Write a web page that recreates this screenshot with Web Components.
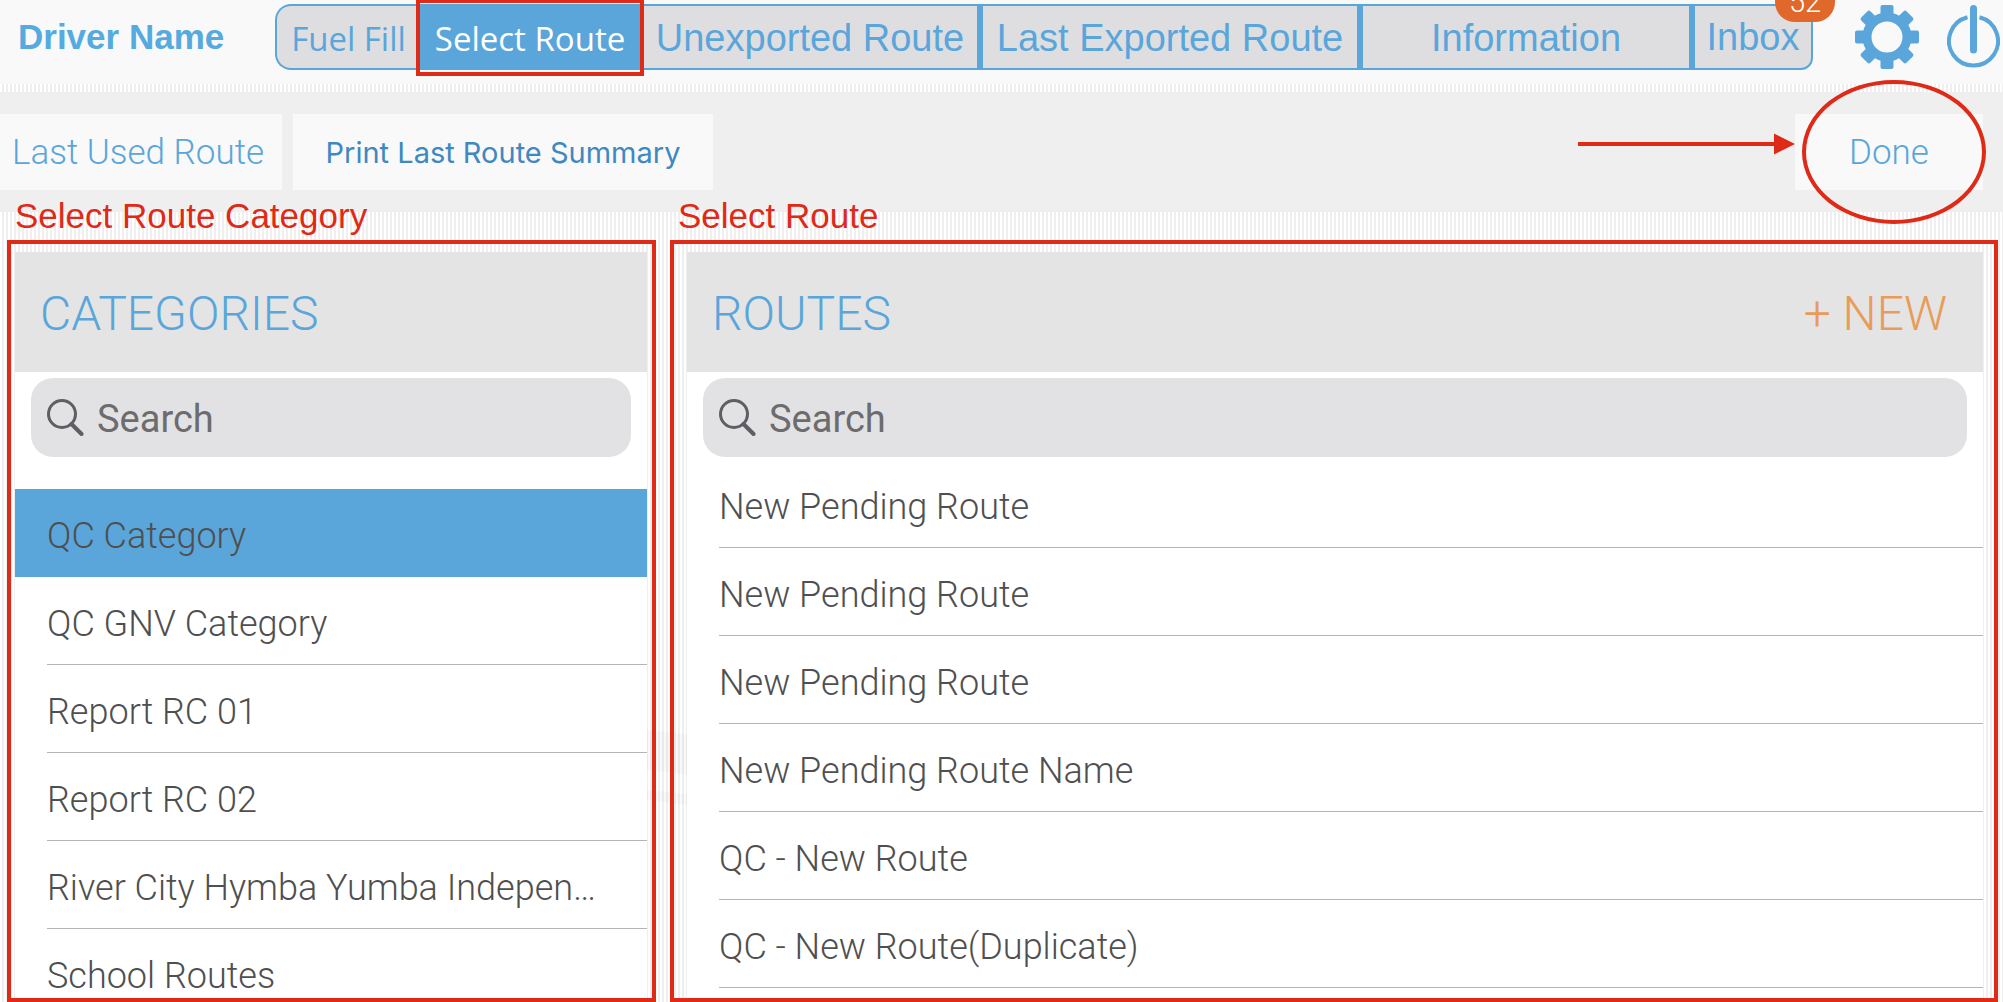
<!DOCTYPE html>
<html lang="en">
<head>
<meta charset="utf-8">
<title>Select Route</title>
<style>
  html, body { height: 100%; }
  body {
    margin: 0;
    overflow: hidden;
    font-family: "Liberation Sans", Arial, sans-serif;
    --blue: #5aa6db;
    --red: #df2a17;
    --light: Roboto, "Liberation Sans", sans-serif;
  }
</style>
</head>
<body>
<route-app></route-app>

<script>
class BaseElement extends HTMLElement {
  constructor() {
    super();
    const template = document.createElement("template");
    template.innerHTML = `
      <style>
        :host { box-sizing: border-box; }
        *, *::before, *::after { box-sizing: border-box; }
        button { font: inherit; color: inherit; border: 0; margin: 0; padding: 0; background: none; cursor: pointer; }
      </style>
      ${this.render()}
    `;
    this.attachShadow({ mode: "open" }).appendChild(template.content.cloneNode(true));
  }
}

class NavTab extends BaseElement {
  render() {
    return `
      <style>
        :host { display: block; position: relative; min-width: 0; font-size: 38px; color: var(--blue); }
        button {
          width: 100%;
          height: 100%;
          padding-top: 2px;
          background: #dedee0;
          border: 2px solid var(--blue);
          border-width: 2px 3px;
          white-space: nowrap;
        }
        :host(:first-child) button { border-radius: 16px 0 0 16px; border-left-width: 2px; border-right: 0; }
        :host(:last-child) button { border-radius: 0 0 12px 0; border-right-width: 2px; padding-top: 0; }
        :host([humanist]) { font-family: "Open Sans", "Noto Sans", sans-serif; font-size: 33px; }
        :host([active]) { color: #fff; z-index: 1; }
        :host([active]) button { background: var(--blue); }
        :host([active])::after {
          content: "";
          position: absolute;
          inset: -5px -4px -6px;
          border: 4px solid var(--red);
          pointer-events: none;
        }
        ::slotted(.badge) {
          position: absolute;
          top: -26px;
          right: -22px;
          width: 60px;
          height: 44px;
          line-height: 48px;
          border-radius: 20px;
          background: #e0682b;
          color: #fff;
          font-family: var(--light);
          font-weight: 300;
          font-size: 29px;
          text-align: center;
        }
      </style>
      <button type="button"><slot></slot></button>
      <slot name="badge"></slot>
    `;
  }
}

class AppHeader extends BaseElement {
  render() {
    return `
      <style>
        :host {
          display: flex;
          flex: none;
          height: 84px;
          padding: 4px 3px 14px 18px;
          background: #f9f9f9;
        }
        .name { flex: none; width: 257px; line-height: 66px; font-size: 35px; font-weight: bold; color: #55aadf; }
        nav { flex: 1; display: grid; grid-template-columns: 145fr 220fr 340fr 380fr 332fr 121fr; }
        .icons { display: flex; gap: 28px; padding-left: 42px; color: var(--blue); }
        svg { display: block; height: 64px; }
      </style>
      <div class="name">Driver Name</div>
      <nav>
        <nav-tab humanist>Fuel Fill</nav-tab>
        <nav-tab humanist active>Select Route</nav-tab>
        <nav-tab>Unexported Route</nav-tab>
        <nav-tab>Last Exported Route</nav-tab>
        <nav-tab>Information</nav-tab>
        <nav-tab>Inbox<span class="badge" slot="badge">52</span></nav-tab>
      </nav>
      <div class="icons">
        <button type="button" aria-label="Settings">
          <svg width="64" viewBox="0 0 64 64" fill="currentColor">
            <circle cx="32" cy="32" r="20" fill="none" stroke="currentColor" stroke-width="9"/>
            <g id="teeth">
              <rect x="25.5" y="0" width="13" height="13" rx="2"/>
              <rect x="25.5" y="51" width="13" height="13" rx="2"/>
              <rect x="0" y="25.5" width="13" height="13" rx="2"/>
              <rect x="51" y="25.5" width="13" height="13" rx="2"/>
            </g>
            <use href="#teeth" transform="rotate(45 32 32)"/>
          </svg>
        </button>
        <button type="button" aria-label="Log out">
          <svg width="53" viewBox="0 0 53 64" fill="none" stroke="currentColor">
            <path d="M32.5 12.3A24.5 24.5 0 1 1 20.5 12.3" stroke-width="4"/>
            <path d="M26.5 3.5V45" stroke-width="7" stroke-linecap="round"/>
          </svg>
        </button>
      </div>
    `;
  }
}

class ToolButton extends BaseElement {
  render() {
    return `
      <style>
        :host {
          display: block;
          position: relative;
          font-family: var(--light);
          font-weight: 300;
          font-size: 35px;
          color: var(--blue);
        }
        button { height: 76px; width: 100%; background: #f9f9f9; white-space: nowrap; }
        :host([start]) button { padding-left: 12px; text-align: left; }
        :host([plain]) { font-family: Inter, sans-serif; font-weight: 400; font-size: 29px; color: #3f88c0; }
        .ring, .arrow { display: none; }
        :host([circled]) .ring {
          display: block;
          position: absolute;
          inset: -34px -3px -34px 7px;
          border: 4px solid var(--red);
          border-radius: 50%;
          pointer-events: none;
        }
        :host([circled]) .arrow { display: block; position: absolute; right: 100%; top: 18px; }
      </style>
      <button type="button"><slot></slot></button>
      <span class="ring"></span>
      <svg class="arrow" width="217" height="24" viewBox="0 0 217 24" fill="#df2a17">
        <path d="M0 10H196V1.500L217 12L196 22.500V14H0Z"/>
      </svg>
    `;
  }
}

class RouteToolbar extends BaseElement {
  render() {
    return `
      <style>
        :host {
          display: flex;
          flex: none;
          gap: 11px;
          height: 120px;
          margin-top: 8px;
          padding: 22px 20px 22px 0;
          background: #efefef;
        }
        .last { width: 282px; }
        .print { width: 420px; }
        .done { width: 188px; margin-left: auto; z-index: 2; }
      </style>
      <tool-button class="last" start>Last Used Route</tool-button>
      <tool-button class="print" plain>Print Last Route Summary</tool-button>
      <tool-button class="done" circled>Done</tool-button>
    `;
  }
}

class CalloutFrame extends BaseElement {
  render() {
    return `
      <style>
        :host {
          display: flex;
          position: relative;
          min-width: 0;
          min-height: 0;
          border: 4px solid var(--red);
        }
        ::slotted([slot="label"]) {
          position: absolute;
          left: 4px;
          bottom: calc(100% + 4px);
          line-height: 48px;
          font-size: 35px;
          color: var(--red);
          white-space: nowrap;
        }
      </style>
      <slot name="label"></slot>
      <slot></slot>
    `;
  }
}

class SearchField extends BaseElement {
  render() {
    return `
      <style>
        :host { display: block; padding: 6px 16px 0; }
        label {
          display: flex;
          align-items: center;
          gap: 13px;
          height: 79px;
          padding: 0 16px;
          border-radius: 22px;
          background: #e2e2e4;
        }
        svg { flex: none; }
        input {
          flex: 1;
          min-width: 0;
          padding: 3px 0 0;
          border: 0;
          outline: 0;
          background: none;
          font-family: Roboto, sans-serif;
          font-size: 38px;
          color: #444;
        }
        input::placeholder { color: #6c6c6e; opacity: 1; }
      </style>
      <label>
        <svg width="37" height="38" viewBox="0 0 37 38" fill="none" stroke="#5e5e63">
          <circle cx="15" cy="15" r="13.500" stroke-width="3"/>
          <path d="M24.500 25L34.500 35" stroke-width="4" stroke-linecap="round"/>
        </svg>
        <input type="search" placeholder="Search" aria-label="Search">
      </label>
    `;
  }
}

class ListRow extends BaseElement {
  render() {
    return `
      <style>
        :host {
          display: block;
          height: 88px;
          padding-left: 32px;
          font-family: var(--light);
          font-weight: 300;
          font-size: 36px;
          color: #4f4f4f;
        }
        button {
          width: 100%;
          height: 100%;
          padding-top: 6px;
          border-bottom: 1px solid #b4b4b4;
          text-align: left;
          white-space: nowrap;
          overflow: hidden;
          text-overflow: ellipsis;
        }
        :host([selected]) { background: var(--blue); }
        :host([selected]) button { border-color: transparent; }
      </style>
      <button type="button"><slot></slot></button>
    `;
  }
}

class ListPanel extends BaseElement {
  render() {
    return `
      <style>
        :host { display: flex; flex-direction: column; flex: 1; min-width: 0; background: #fff; }
        header {
          display: flex;
          flex: none;
          align-items: center;
          justify-content: space-between;
          height: 120px;
          padding: 2px 36px 0 25px;
          background: #e4e4e4;
          font-family: var(--light);
          font-weight: 300;
          font-size: 48px;
          color: var(--blue);
        }
        .list { flex: 1; min-height: 0; overflow: hidden; padding-top: var(--list-top, 3px); }
        h2 { margin: 0; font: inherit; }
      </style>
      <header><h2><slot name="title"></slot></h2><slot name="action"></slot></header>
      <search-field></search-field>
      <div class="list"><slot></slot></div>
    `;
  }
}

class RouteApp extends BaseElement {
  render() {
    return `
      <style>
        :host {
          display: flex;
          flex-direction: column;
          height: 100vh;
          background: repeating-linear-gradient(90deg, #fff 0 2px, #efefef 2px 4px);
        }
        main {
          flex: 1;
          display: grid;
          grid-template-columns: 649fr 1328fr;
          grid-template-rows: minmax(0, 1fr);
          gap: 14px;
          min-height: 0;
          padding: 28px 5px 0 7px;
          position: relative;
        }
        .categories { padding: 8px 5px 0 4px; }
        .routes { padding: 8px 11px 0 13px; }
        .categories list-panel { --list-top: 32px; }
        .new { color: #e89c58; }
        .watermark { position: absolute; left: 647px; top: 518px; }
      </style>
      <app-header></app-header>
      <route-toolbar></route-toolbar>
      <main>
        <svg class="watermark" width="40" height="76" viewBox="0 0 40 76" fill="#000" fill-opacity=".025">
          <path d="M0 0L40 4V45L0 40ZM0 60L40 64V75L0 70Z"/>
        </svg>
        <callout-frame class="categories">
          <span slot="label">Select Route Category</span>
          <list-panel>
            <span slot="title">CATEGORIES</span>
            <list-row selected>QC Category</list-row>
            <list-row>QC GNV Category</list-row>
            <list-row>Report RC 01</list-row>
            <list-row>Report RC 02</list-row>
            <list-row>River City Hymba Yumba Indepen…</list-row>
            <list-row>School Routes</list-row>
          </list-panel>
        </callout-frame>
        <callout-frame class="routes">
          <span slot="label">Select Route</span>
          <list-panel>
            <span slot="title">ROUTES</span>
            <button type="button" slot="action" class="new">+ NEW</button>
            <list-row>New Pending Route</list-row>
            <list-row>New Pending Route</list-row>
            <list-row>New Pending Route</list-row>
            <list-row>New Pending Route Name</list-row>
            <list-row>QC - New Route</list-row>
            <list-row>QC - New Route(Duplicate)</list-row>
          </list-panel>
        </callout-frame>
      </main>
    `;
  }
}

customElements.define("nav-tab", NavTab);
customElements.define("app-header", AppHeader);
customElements.define("tool-button", ToolButton);
customElements.define("route-toolbar", RouteToolbar);
customElements.define("callout-frame", CalloutFrame);
customElements.define("search-field", SearchField);
customElements.define("list-row", ListRow);
customElements.define("list-panel", ListPanel);
customElements.define("route-app", RouteApp);
</script>
</body>
</html>
